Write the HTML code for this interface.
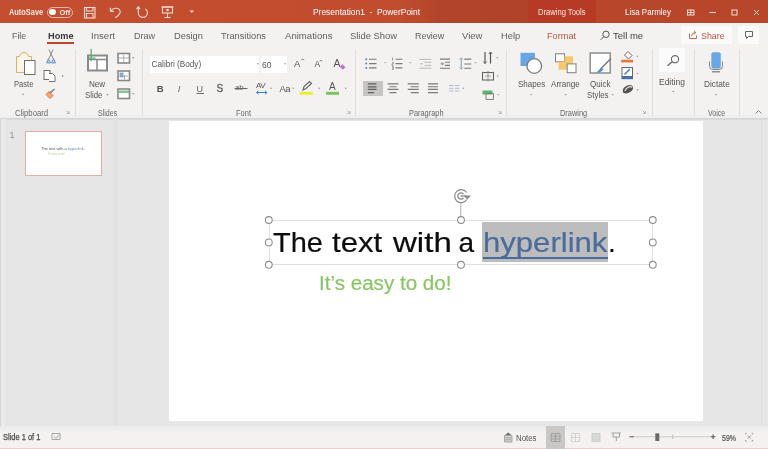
<!DOCTYPE html>
<html><head><meta charset="utf-8">
<style>
*{margin:0;padding:0;box-sizing:border-box}
html,body{width:768px;height:449px;overflow:hidden;background:#e6e6e6;font-family:"Liberation Sans",sans-serif}
.a{position:absolute}
.t{position:absolute;white-space:nowrap;line-height:1}
#root{position:absolute;left:0;top:0;width:768px;height:449px;will-change:transform}
#title{left:0;top:0;width:768px;height:23px;background:linear-gradient(to right,#c44f30 0px,#c14c2e 400px,#b2442a 440px,#b1432a 528px,#b7462b 600px,#b7462b 768px)}
#tabs{left:0;top:23px;width:768px;height:24px;background:#f4f2f1}
#ribbon{left:0;top:47px;width:768px;height:72px;background:#f4f2f1}
.tab{font-size:9.6px;color:#5e5e5e;top:31px;transform-origin:0 0}
.lbl{font-size:8.5px;color:#666;transform-origin:0 0}
.r{font-size:9px;color:#555;transform-origin:0 0}
.sep{position:absolute;width:1px;background:#e2e0de}
svg{position:absolute;overflow:visible}
</style></head><body><div id="root">
<!-- title bar -->
<div id="title" class="a">
  <div class="t" style="left:9px;top:8px;font-size:8.5px;color:#fbe9e3;font-weight:bold;transform:scaleX(0.87);transform-origin:0 0">AutoSave</div>
  <div class="a" style="left:46.5px;top:6.5px;width:26.5px;height:11px;border:1px solid #eab3a3;border-radius:6px"></div>
  <div class="a" style="left:49px;top:8.7px;width:6.5px;height:6.5px;border-radius:50%;background:#fff"></div>
  <div class="t" style="left:59.4px;top:8.5px;font-size:7.5px;color:#fbe9e3;font-weight:bold">Off</div>
  <svg style="left:0;top:0" width="768" height="23">
   <g fill="none" stroke="#f7dcd3" stroke-width="1.1">
    <rect x="84.5" y="7.5" width="10.5" height="10.5"/>
    <path d="M86.5 7.5v3.5h6.5v-3.5M86.5 18v-4.5h6.5V18"/>
    <path d="M110.8 10.8 Q113 7.8 116.8 8.3 Q121 9.3 120 13 Q119 15.5 115.2 17.8"/><path d="M110.3 7.8 L110.6 11.2 L114 11.4" stroke-width="1.3"/>
    <path d="M138.3 7.5 V12.8 a4.6 4.6 0 0 0 9.2 0 a4.6 4.6 0 0 0 -2.2 -3.9"/><path d="M136.6 9.2 L138.3 6.8 L140 9.2" stroke-width="1.2"/>
    <rect x="162.5" y="7" width="10" height="6"/><path d="M161.5 7h12M167.5 13v4.5M164.5 17.5h6"/>
   </g>
   <path d="M189.5 10.5h4.5l-2.25 2.6z" fill="#f7dcd3"/><circle cx="167.5" cy="10" r="1.3" fill="#f7dcd3"/>
  </svg>
  <div class="a" style="left:528px;top:0;width:68px;height:23px;background:#b63a24"></div>
  <div class="t" style="left:538px;top:7.5px;font-size:8.5px;color:#fbe9e3;transform:scaleX(0.894);transform-origin:0 0">Drawing Tools</div>
  <div class="t" style="left:313px;top:8.3px;font-size:9px;color:#fff;transform:scaleX(0.934);transform-origin:0 0">Presentation1&nbsp; - &nbsp;PowerPoint</div>
  <div class="t" style="left:625px;top:8.3px;font-size:9px;color:#fff;transform:scaleX(0.885);transform-origin:0 0">Lisa Parmley</div>
  <svg style="left:0;top:0" width="768" height="23">
   <g fill="none" stroke="#f7dcd3" stroke-width="1">
    <rect x="687.5" y="10" width="6.5" height="5"/><path d="M687.5 12.5h6.5M690.75 10v5"/>
    <path d="M709.5 12.5h6.5"/>
    <rect x="732" y="10" width="5" height="5"/>
    <path d="M754 10l5 5M759 10l-5 5"/>
   </g>
  </svg>
</div>
<!-- tabs -->
<div id="tabs" class="a"></div>
<div class="t tab" style="left:12px;transform:scaleX(0.92)">File</div>
<div class="t tab" style="left:48px;color:#3a3a3a;font-weight:bold;transform:scaleX(0.96)">Home</div>
<div class="a" style="left:47px;top:42px;width:27px;height:2px;background:#b9472b"></div>
<div class="t tab" style="left:91px">Insert</div>
<div class="t tab" style="left:134px;transform:scaleX(0.94)">Draw</div>
<div class="t tab" style="left:174px;transform:scaleX(0.97)">Design</div>
<div class="t tab" style="left:221px;transform:scaleX(0.965)">Transitions</div>
<div class="t tab" style="left:285px;transform:scaleX(1.0)">Animations</div>
<div class="t tab" style="left:350px;transform:scaleX(0.98)">Slide Show</div>
<div class="t tab" style="left:415px;transform:scaleX(0.93)">Review</div>
<div class="t tab" style="left:462px;transform:scaleX(0.99)">View</div>
<div class="t tab" style="left:501px;transform:scaleX(0.97)">Help</div>
<div class="t tab" style="left:547px;color:#b9553d;transform:scaleX(0.955)">Format</div>
<svg style="left:0;top:0" width="768" height="50">
 <g fill="none" stroke="#555" stroke-width="1">
  <circle cx="606" cy="34.3" r="3.2"/><path d="M603.8 36.6l-3.2 3.2"/>
 </g>
</svg>
<div class="t tab" style="left:613px;color:#444;transform:scaleX(0.99)">Tell me</div>
<div class="a" style="left:681px;top:26px;width:51px;height:18px;background:#fbfafa;border-radius:1px"></div>
<svg style="left:0;top:0" width="768" height="50">
 <g fill="none" stroke="#c06a55" stroke-width="1">
  <path d="M689.5 33.5v5h7v-3"/><path d="M691.5 36 q0.5 -3.5 4 -3.5M694 30.8l1.8 1.7 -1.8 1.7"/>
 </g>
</svg>
<div class="t" style="left:701px;top:31px;font-size:9.6px;color:#b9553d;transform:scaleX(0.92);transform-origin:0 0">Share</div>
<div class="a" style="left:738px;top:26px;width:21px;height:18px;background:#fbfafa"></div>
<svg style="left:0;top:0" width="768" height="50">
 <path d="M745.5 31.5h7v5h-4l-2 2v-2h-1z" fill="none" stroke="#666" stroke-width="1"/>
</svg>
<!-- ribbon -->
<div id="ribbon" class="a"></div>
<div class="a" style="left:0;top:114.5px;width:768px;height:3.5px;background:#f0efef"></div>
<div class="a" style="left:0;top:118px;width:768px;height:2px;background:linear-gradient(#d3d3d3,#dcdcdc)"></div>
<!-- separators -->
<div class="sep" style="left:75px;top:50px;height:66px"></div>
<div class="sep" style="left:142px;top:50px;height:66px"></div>
<div class="sep" style="left:355px;top:50px;height:66px"></div>
<div class="sep" style="left:506px;top:50px;height:66px"></div>
<div class="sep" style="left:652px;top:50px;height:66px"></div>
<div class="sep" style="left:694px;top:50px;height:66px"></div>
<div class="sep" style="left:739px;top:50px;height:66px"></div>
<!-- ribbon labels -->
<div class="t lbl" style="left:14.6px;top:108.5px;transform:scaleX(0.91)">Clipboard</div>
<div class="t lbl" style="left:98.4px;top:108.5px;transform:scaleX(0.83)">Slides</div>
<div class="t lbl" style="left:236px;top:108.5px;transform:scaleX(0.88)">Font</div>
<div class="t lbl" style="left:408.6px;top:108.5px;transform:scaleX(0.87)">Paragraph</div>
<div class="t lbl" style="left:560.4px;top:108.5px;transform:scaleX(0.87)">Drawing</div>
<div class="t lbl" style="left:707.7px;top:108.5px;transform:scaleX(0.83)">Voice</div>
<!-- clipboard group -->
<svg style="left:0;top:0" width="768" height="120">
 <g fill="none" stroke-width="1">
  <path d="M16.5 72.5V56.5h3l1-2.5 3.5-2 3.5 2 1 2.5h3v4" stroke="#dcb163" fill="#fdf6e6"/>
  <path d="M16.5 72.5h8" stroke="#dcb163"/>
  <rect x="24.5" y="60.5" width="10.5" height="14" stroke="#6e6e6e" fill="#fff"/>
  <path d="M49 49.5l4 9M53 49.5l-4 9" stroke="#888"/>
  <path d="M48.5 58.5l-2 4.5h4zM53.5 58.5l2 4.5h-4z" stroke="#6f97c7" fill="#b7cde6"/>
  <rect x="44" y="70.5" width="6" height="9" stroke="#6e6e6e" fill="#fff"/>
  <path d="M49 73.5h3.5l2.5 2.5v5.5h-6" stroke="#6e6e6e" fill="#fff"/>
  <path d="M46 94.5l3-3 4 4-3 3z" stroke="#e07a3e" fill="#f6a878"/>
  <path d="M49.5 92.5l5-3.5M50.5 93.5l4-4.5" stroke="#777"/>
 </g>
 <path d="M61.5 75.5h2.5l-1.25 1.5z M21.8 93.8h2.4l-1.2 1.4z" fill="#888"/>
 <path d="M66 110.5l3 3M69 111v2.5h-2.5" stroke="#aaa" fill="none" stroke-width="0.8"/>
</svg>
<div class="t r" style="left:13.6px;top:80px;transform:scaleX(0.84)">Paste</div>
<!-- font group -->
<div class="a" style="left:150px;top:56px;width:109px;height:16.5px;background:#fff"></div>
<div class="a" style="left:261px;top:56px;width:26px;height:16.5px;background:#fff"></div>
<div class="t" style="left:151.6px;top:61px;font-size:8.2px;color:#555">Calibri (Body)</div>
<div class="t" style="left:262px;top:61px;font-size:8.5px;color:#555">60</div>
<div class="t" style="left:294px;top:58.5px;font-size:9.5px;color:#555">A</div>
<div class="t" style="left:314.5px;top:59.5px;font-size:8.5px;color:#555">A</div>
<div class="t" style="left:333.5px;top:58px;font-size:10.5px;color:#555">A</div>
<div class="t" style="left:156.8px;top:83.5px;font-size:9.5px;font-weight:bold;color:#505050">B</div>
<div class="t" style="left:177.8px;top:83.5px;font-size:9.5px;font-style:italic;color:#6a6a6a">I</div>
<div class="t" style="left:196.3px;top:83.5px;font-size:9.5px;color:#6a6a6a">U</div>
<div class="t" style="left:216.5px;top:83.5px;font-size:10px;color:#5a5a5a;-webkit-text-stroke:0.3px #5a5a5a">S</div>
<div class="t" style="left:235px;top:84px;font-size:8px;color:#666;letter-spacing:-0.3px">ab</div>
<div class="t" style="left:256px;top:81.8px;font-size:8px;color:#555;letter-spacing:-0.6px">AV</div>
<div class="t" style="left:279.4px;top:83.5px;font-size:9.5px;color:#555;letter-spacing:-0.5px">Aa</div>
<div class="t" style="left:329px;top:81.5px;font-size:10px;color:#555">A</div>
<svg style="left:0;top:0" width="768" height="120">
 <path d="M256.8 63.3h2.4l-1.2 1.4zM284 63.3h2.4l-1.2 1.4z" fill="#999"/>
 <path d="M301.3 60.3l1.3-1.4 1.3 1.4M320 61.3l1.1-1.2 1.1 1.2" stroke="#666" fill="none" stroke-width="0.9"/>
 <path d="M339.8 66.8l2.6-2.6 3 3-2.6 2.6z" fill="#c56fcb"/>
 <path d="M196.5 93.5h7.5" stroke="#6a6a6a" stroke-width="1"/>
 <path d="M234.5 88.5h13" stroke="#666" stroke-width="1"/>
 <path d="M256.5 92.5h10.5M258.5 90.8l-2 1.7 2 1.7M265 90.8l2 1.7-2 1.7" stroke="#3d7fc4" stroke-width="1" fill="none"/>
 <path d="M303 90l1-3.5 5.5-5 2 2-5.5 5z" fill="none" stroke="#666" stroke-width="1.1"/>
 <rect x="299.5" y="91.8" width="13.5" height="3" fill="#e9ee3c"/>
 <rect x="326" y="91.8" width="13" height="3" fill="#78c65a"/>
 <path d="M270 87.8h2.4l-1.2 1.4zM292 87.8h2.4l-1.2 1.4zM318 87.8h2.4l-1.2 1.4zM344.5 87.8h2.4l-1.2 1.4z" fill="#999"/>
 <path d="M347 110.5l3 3M350 111v2.5h-2.5M498 110.5l3 3M501 111v2.5h-2.5M642.5 110.5l3 3M645.5 111v2.5h-2.5" stroke="#aaa" fill="none" stroke-width="0.8"/>
</svg>
<!-- paragraph group -->
<div class="a" style="left:362.5px;top:80.5px;width:20.5px;height:15.5px;background:#c6c5c4"></div>
<svg style="left:0;top:0" width="768" height="120">
 <g stroke="#7a7a7a" stroke-width="1.1" fill="none">
  <path d="M369 59.3h7.5M369 63.6h7.5M369 67.9h7.5"/>
  <path d="M395.5 59.3h7M395.5 63.6h7M395.5 67.9h7"/>
  <path d="M392.5 57.5v3M392 62.5h1.3v1.5h-1.3v1.5h1.3M392 66.5h1.3v3h-1.3M392 68h1.3" stroke-width="0.7"/>
  <path d="M367.8 83.9h8.7M367.8 86.8h8.7M367.8 89.4h8.7M367.8 92.6h6" stroke="#5e5e5e" stroke-width="1.3"/>
  <path d="M387.5 83.9h11M389.5 86.8h7M387.5 89.4h11M389.5 92.6h7"/>
  <path d="M407.8 83.9h11M410.8 86.8h8M407.8 89.4h11M410.8 92.6h8"/>
  <path d="M428 83.9h10M428 86.8h10M428 89.4h10M428 92.6h10"/>
  <path d="M440 59.1h10M445 62.2h5M445 65.4h5M440 68.2h10"/>
  <path d="M440.5 63.8h3M442 62.3l1.5 1.5-1.5 1.5" stroke-width="0.9"/>
  <path d="M464.3 59.1h7M464.3 64h7M464.3 68.2h7"/>
  <path d="M461.2 58v11" stroke="#8aa0b8"/>
  <path d="M459.5 59.5l1.7-1.7 1.7 1.7M459.5 67.5l1.7 1.7 1.7-1.7" stroke="#8aa0b8" stroke-width="0.9"/>
  <path d="M485 52v11.5M490.5 52v11.5" stroke="#555" stroke-width="1.2"/>
  <path d="M483.3 61.5l1.7 2 1.7-2M488.8 54l1.7-2 1.7 2" stroke="#555" stroke-width="0.9"/>
  <rect x="482.5" y="72.5" width="11" height="7.5" stroke="#666"/>
  <path d="M488 71v10.5M485 76h6" stroke="#888" stroke-width="0.8"/>
 </g>
 <g fill="#4a86c8"><circle cx="366.2" cy="59.3" r="1"/><circle cx="366.2" cy="63.6" r="1"/><circle cx="366.2" cy="67.9" r="1"/></g>
 <g stroke="#b8b8b8" stroke-width="1" fill="none"><path d="M419.5 59.3h12M424.5 62.3h7M424.5 65.4h7M419.5 68.2h12M420 63.8h3"/></g>
 <g stroke="#aabbd0" stroke-width="1" fill="none"><path d="M449 85.5h4.5M455 85.5h4.5M449 88.3h4.5M455 88.3h4.5M449 91h4.5M455 91h4.5"/></g>
 <path d="M482.5 90.5h10v4h-10z" fill="#5bb86a"/>
 <path d="M486 93.5h7.5v6h-7.5z" fill="none" stroke="#777" stroke-width="0.9"/>
 <path d="M384 62.2h2.4l-1.2 1.4zM409 62.2h2.4l-1.2 1.4zM474.5 62.2h2.4l-1.2 1.4zM462 87.8h2.4l-1.2 1.4zM496 57.3h2.4l-1.2 1.4zM496.5 75.5h2.4l-1.2 1.4zM497 94.2h2.4l-1.2 1.4z" fill="#999"/>
</svg>
<!-- drawing group -->
<svg style="left:0;top:0" width="768" height="120">
 <rect x="520.5" y="52.8" width="14.4" height="13.2" fill="#67a5e6"/>
 <circle cx="534.3" cy="66" r="7.3" fill="#fff" stroke="#7a7a7a" stroke-width="1.3"/>
 <rect x="555.5" y="53.8" width="9" height="8" fill="#fff" stroke="#808080" stroke-width="1"/>
 <path d="M558.5 61.8h6v-5.6h8.5v7.6h-6v6h-8.5z" fill="#f7c76b"/>
 <rect x="567.2" y="63.9" width="8.8" height="8.8" fill="#fff" stroke="#808080" stroke-width="1"/>
 <rect x="590.2" y="53" width="20" height="20" fill="#fff" stroke="#858585" stroke-width="1.4"/>
 <path d="M611 58.5l-10.5 10.5" stroke="#777" stroke-width="1.4"/>
 <path d="M601.5 67.5l2 2-3.5 3h-3.5z" fill="#4d8fd6"/>
 <path d="M624.5 55l3.5-3.5 4 4-3.5 3.5z" fill="#fff" stroke="#666" stroke-width="1"/>
 <rect x="621.2" y="59.8" width="11.8" height="2.6" fill="#e8763a"/>
 <rect x="622" y="67.5" width="10.5" height="9" fill="#fff" stroke="#666" stroke-width="1"/>
 <path d="M624.5 74.5l5.5-5.5" stroke="#3c78c2" stroke-width="1.5"/>
 <rect x="621.5" y="76.8" width="11.5" height="2.4" fill="#3c6fb8"/>
 <path d="M623.2 92.8q-1.8-4 3-6.8q4.5-2.2 6.6 0.5q1.2 2.8-2.2 5.2q-3.8 2.8-7.4 1.1z" fill="#555"/><path d="M625 91q0.5-2.5 3.5-4q2.5-1 3.5 0.5" fill="none" stroke="#eee" stroke-width="1.2"/>
 <path d="M636.3 55.8h2.4l-1.2 1.4zM636.3 73h2.4l-1.2 1.4zM636.3 89.3h2.4l-1.2 1.4zM530 94h2.4l-1.2 1.4zM564.5 94h2.4l-1.2 1.4zM611.5 94.3h2.4l-1.2 1.4z" fill="#999"/>
</svg>
<div class="t r" style="left:517.9px;top:80px;transform:scaleX(0.89)">Shapes</div>
<div class="t r" style="left:551px;top:80px;transform:scaleX(0.9)">Arrange</div>
<div class="t r" style="left:589.6px;top:80px;transform:scaleX(0.89)">Quick</div>
<div class="t r" style="left:586.5px;top:90.5px;transform:scaleX(0.88)">Styles</div>
<!-- editing / voice -->
<div class="a" style="left:658.6px;top:47.8px;width:26px;height:24px;background:#fbfbfb"></div>
<svg style="left:0;top:0" width="768" height="120">
 <circle cx="675" cy="59.2" r="3.6" fill="none" stroke="#666" stroke-width="1.1"/>
 <path d="M672.4 61.8l-5 4" stroke="#666" stroke-width="1.2"/>
 <path d="M709.5 61.5v5q0 3 3 3h7q3 0 3-3v-5" fill="none" stroke="#888" stroke-width="1"/>
 <rect x="711.6" y="52.6" width="9" height="15.7" rx="1.5" fill="#68a8ea" stroke="#8aa4be" stroke-width="0.6"/>
 <path d="M712 71.8h8" stroke="#777" stroke-width="1.2"/>
 <path d="M672 91h2.4l-1.2 1.4zM714.8 94h2.4l-1.2 1.4z" fill="#999"/>
 <path d="M755.5 113.5l3-3 3 3" stroke="#777" fill="none" stroke-width="0.9"/>
</svg>
<div class="t r" style="left:659.2px;top:78px;transform:scaleX(0.94)">Editing</div>
<div class="t r" style="left:703.7px;top:80.3px;transform:scaleX(0.92)">Dictate</div>
<!-- slides group -->
<svg style="left:0;top:0" width="768" height="120">
 <g fill="none">
  <rect x="88" y="55.5" width="19" height="15" stroke="#8a8a8a" stroke-width="2" fill="#fff"/>
  <path d="M88 59.5h19M97 59.5v11" stroke="#8a8a8a" stroke-width="1.5"/>
  <path d="M91.2 49v12M87.6 58.2h8" stroke="#4fb36f" stroke-width="1.3"/>
  <rect x="118" y="53.5" width="11.5" height="9.5" stroke="#888" stroke-width="1.6" fill="#fff"/>
  <path d="M123.7 55v7M119 58h10" stroke="#aaa" stroke-width="1"/>
  <rect x="118" y="71" width="11.5" height="9.5" stroke="#888" stroke-width="1.6" fill="#fff"/>
  <path d="M119.5 72.5h4v5h-4z" fill="#7ea7d8"/>
  <path d="M124.5 75v4.5M121 76h7" stroke="#aaa" stroke-width="1"/>
  <rect x="118" y="89" width="11.5" height="9.5" stroke="#888" stroke-width="1.6" fill="#fff"/>
  <path d="M119 90.5h10v2.5h-10z" fill="#7dc98f"/>
 </g>
 <path d="M132 57.3h2.4l-1.2 1.4zM132 93.3h2.4l-1.2 1.4zM106.3 94h2.4l-1.2 1.4z" fill="#888"/>
</svg>
<div class="t r" style="left:88.8px;top:80px;transform:scaleX(0.9)">New</div>
<div class="t r" style="left:85.2px;top:91.2px;transform:scaleX(0.87)">Slide</div>

<!-- left thumbnails panel -->
<div class="a" style="left:0;top:119px;width:6px;height:307px;background:#e9e9e9"></div>
<div class="a" style="left:0;top:119px;width:1px;height:330px;background:#d5d5d5"></div>
<div class="a" style="left:6px;top:119px;width:1px;height:307px;background:#e0e0e0"></div>
<div class="a" style="left:113px;top:119px;width:5px;height:307px;background:#e2e2e2"></div>
<div class="a" style="left:25px;top:131px;width:77px;height:45px;background:#fff;border:1px solid #e6ada2"></div>
<div class="t" style="left:9.5px;top:130.5px;font-size:9px;color:#9a8e8c">1</div>
<!-- slide -->
<div class="a" style="left:169px;top:121px;width:534px;height:300px;background:#fff"></div>

<!-- text box selection -->
<div class="a" style="left:268.5px;top:220px;width:384.5px;height:45px;border:1px solid #e0e0e0"></div>
<div class="a" style="left:482.4px;top:222px;width:125.8px;height:39.6px;background:#bdbdbd"></div>
<div class="t" style="left:272.7px;top:229px;font-size:28px;color:#0d0d0d;-webkit-text-stroke:0.2px #0d0d0d;transform:scaleX(1.035);transform-origin:0 0">The</div>
<div class="t" style="left:332.4px;top:229px;font-size:28px;color:#0d0d0d;-webkit-text-stroke:0.2px #0d0d0d;transform:scaleX(1.11);transform-origin:0 0">text</div>
<div class="t" style="left:392.8px;top:229px;font-size:28px;color:#0d0d0d;-webkit-text-stroke:0.2px #0d0d0d;transform:scaleX(1.18);transform-origin:0 0">with</div>
<div class="t" style="left:458.6px;top:229px;font-size:28px;color:#0d0d0d;-webkit-text-stroke:0.2px #0d0d0d">a</div>
<div class="t" style="left:482.9px;top:229px;font-size:28px;color:#4a6c9c;-webkit-text-stroke:0.2px #4a6c9c;transform:scaleX(1.11);transform-origin:0 0">hyperlink</div>
<div class="t" style="left:608px;top:229px;font-size:28px;color:#0d0d0d;-webkit-text-stroke:0.2px #0d0d0d">.</div>
<div class="a" style="left:482.7px;top:256.6px;width:125px;height:2.2px;background:#4a6c9c"></div>
<div class="t" style="left:318.7px;top:273px;font-size:20px;color:#88c663;-webkit-text-stroke:0.2px #88c663;transform:scaleX(1.03);transform-origin:0 0">It’s easy to do!</div>
<svg style="left:0;top:0" width="768" height="449">
 <g fill="#fff" stroke="#8e8e8e" stroke-width="1.1">
  <circle cx="268.8" cy="220" r="3.4"/><circle cx="461" cy="220" r="3.4"/><circle cx="652.8" cy="220" r="3.4"/>
  <circle cx="268.8" cy="242.4" r="3.4"/><circle cx="652.8" cy="242.4" r="3.4"/>
  <circle cx="268.8" cy="264.8" r="3.4"/><circle cx="461" cy="264.8" r="3.4"/><circle cx="652.8" cy="264.8" r="3.4"/>
 </g>
 <path d="M460.8 203v13" stroke="#b0b0b0" stroke-width="1"/>
 <g fill="none" stroke="#8a8a8a" stroke-width="1.3">
  <path d="M466.5 192.5a6.5 6.5 0 1 0 0.2 7"/>
  <path d="M463.5 194a3.2 3.2 0 1 0 0 4"/>
  <path d="M460.5 196h6"/>
 </g>
 <path d="M463.5 195.5h7.5l-3.8 4z" fill="#8a8a8a"/>
</svg>
<div class="a" style="left:761px;top:119px;width:1px;height:330px;background:#dedede"></div><div class="a" style="left:765px;top:119px;width:1px;height:330px;background:#e2e2e2"></div>
<!-- status bar -->
<div class="a" style="left:0;top:426px;width:768px;height:23px;background:linear-gradient(#ececec 0px,#efeeee 4px,#f4f1f0 5px)"></div>
<div class="a" style="left:0;top:448px;width:768px;height:1px;background:#eccfc8"></div>
<div class="t" style="left:3px;top:433px;font-size:8.5px;color:#4a4a4a;-webkit-text-stroke:0.25px #4a4a4a;transform:scaleX(0.88);transform-origin:0 0">Slide 1 of 1</div>
<div class="a" style="left:545.5px;top:425.5px;width:19.5px;height:23.5px;background:#c9c8c7"></div>
<svg style="left:0;top:0" width="768" height="449">
 <g fill="none" stroke="#a8a8a8" stroke-width="1">
  <path d="M52 433.5h8v6h-8z M54 436.5l2 2 3.5-4"/>
 </g>
 <path d="M504.5 435.5h7.5v6.5h-7.5z" fill="#d0d0d0" stroke="#999" stroke-width="0.8"/>
 <path d="M508.2 432.5l3 2.5h-6z" fill="#666"/>
 <path d="M505.5 437.8h5.5M505.5 439.8h5.5" stroke="#999" stroke-width="0.7"/>
 <g fill="none" stroke="#9c9c9c" stroke-width="0.9">
  <path d="M551 433.5h9v8h-9zM551 436.2h9M551 438.9h9M555.5 433.5v8"/>
 </g>
 <g fill="none" stroke="#cfcfcf" stroke-width="0.9">
  <path d="M571.5 433.5h8v8h-8zM575.5 433.5v8M571.5 437.5h8"/>
 </g>
 <rect x="592" y="433.5" width="8" height="8" fill="#d8d8d8" stroke="#c8c8c8" stroke-width="0.8"/>
 <path d="M611.5 433h9.5M613 433v4h6.5v-4M616.3 437v4" stroke="#999" stroke-width="0.9" fill="none"/>
 <path d="M629.5 436.8h4.5" stroke="#555" stroke-width="1"/>
 <path d="M634 436.8h77" stroke="#cdcdcd" stroke-width="1"/>
 <path d="M672.8 434.5v4.5" stroke="#bbb" stroke-width="1"/>
 <rect x="655.3" y="433.3" width="4" height="7.7" fill="#6b6b6b"/>
 <path d="M710.8 436.8h4.6M713.1 434.5v4.6" stroke="#555" stroke-width="1.1"/>
 <g fill="none" stroke="#999" stroke-width="0.9">
  <path d="M745.5 434.5v-1.2h1.2M751.5 433.3h1.2v1.2M752.7 440v1.2h-1.2M746.7 441.2h-1.2v-1.2M747.5 435.3l3.5 3.5M751 435.3l-3.5 3.5"/>
 </g>
</svg>
<div class="t" style="left:515.8px;top:433.5px;font-size:8.5px;color:#555;transform:scaleX(0.92);transform-origin:0 0">Notes</div>
<div class="t" style="left:722px;top:433.5px;font-size:8.5px;color:#555;-webkit-text-stroke:0.2px #555;transform:scaleX(0.83);transform-origin:0 0">59%</div>
<!-- thumbnail text -->
<div class="t" style="left:40.5px;top:148.3px;font-size:3.6px;color:#555;transform:scaleX(1.1);transform-origin:0 0">The text with a <span style="color:#6f8fc0">hyperlink</span>.</div>
<div class="t" style="left:48px;top:154px;font-size:2.6px;color:#a8d88a">It’s easy to do!</div>
</div></body></html>
